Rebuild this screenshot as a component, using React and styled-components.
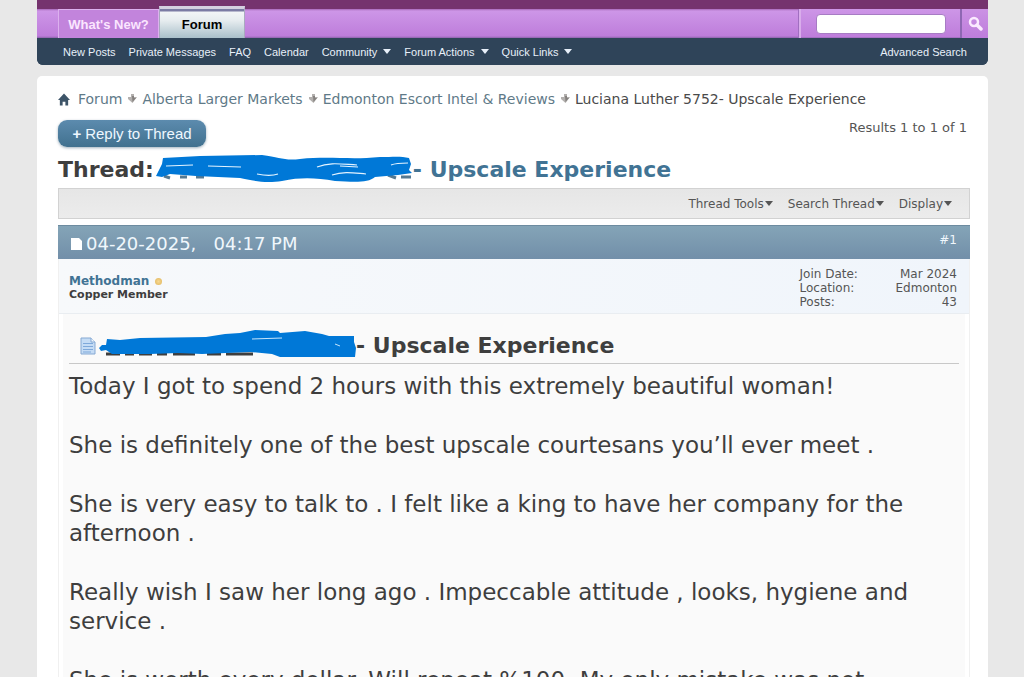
import React from 'react';
import styled, { createGlobalStyle, ThemeProvider } from 'styled-components';

const theme = {
  plum: '#75336e',
  lilac: '#c688e2',
  navy: '#2f4459',
  link: '#417394',
  crumb: '#5f7a88',
  text: '#3e3e3e',
  marker: '#0078d7',
  sans: "'Liberation Sans', Arial, sans-serif",
  verdana: "Verdana, 'DejaVu Sans', sans-serif",
};

const GlobalStyle = createGlobalStyle`
  *, *::before, *::after {
    box-sizing: border-box;
  }

  html {
    scrollbar-width: none;
  }

  body {
    margin: 0;
    background-color: #e8e8e8;
    color: ${theme.text};
    font-family: ${theme.verdana};
    font-size: 13px;
  }

  h1, h2, p, ul, ol, dl, dd {
    margin: 0;
    padding: 0;
  }

  ul, ol {
    list-style: none;
  }

  a {
    color: inherit;
    text-decoration: none;
  }
`;

const StyledPage = styled.div`
  padding: 0 36px 0 37px;
`;

const StyledHeader = styled.header`
  padding-top: 6px;
  border-radius: 0 0 6px 6px;
  overflow: hidden;
  background: linear-gradient(${({ theme }) => theme.plum} 10px, ${({ theme }) => theme.navy} 10px);
  font-family: ${({ theme }) => theme.sans};
`;

const StyledTabBar = styled.div`
  display: flex;
  align-items: stretch;
  justify-content: space-between;
  height: 32px;
  padding-left: 21px;
  background: linear-gradient(
    ${({ theme }) => theme.plum} 3px,
    #a868b8 3px,
    #cd96e7 5px,
    #be7ddb 30px,
    #8d62ab 32px
  );
`;

const StyledTabs = styled.nav`
  display: flex;
  align-items: flex-end;
`;

const StyledTab = styled.a`
  display: flex;
  align-items: center;
  justify-content: center;
  width: ${({ $active }) => ($active ? '86px' : '101px')};
  height: ${({ $active }) => ($active ? '32px' : '29px')};
  padding-top: ${({ $active }) => ($active ? '2px' : '1px')};
  border: 1px solid ${({ $active }) => ($active ? '#a9a9c0' : '#dcb0ee')};
  border-top: ${({ $active }) => ($active ? '3px solid #d5cfe0' : '1px solid #dcb0ee')};
  border-bottom: 0;
  background: ${({ $active }) =>
    $active ? 'linear-gradient(#7b7ba4 2px, #f2f5f7 3px, #e6ecef 40%, #a9c0ca)' : '#c284dc'};
  color: ${({ $active }) => ($active ? '#000' : '#fbe6ff')};
  font-size: 13px;
  font-weight: 700;
`;

const StyledSearch = styled.form`
  display: flex;
  align-items: center;
  margin-top: 3px;
  padding-left: 15px;
  border-left: 2px solid #d9adeb;
  box-shadow: -1px 0 #a06fc0;
  background: linear-gradient(#cd96e7, #be7ddb 28px, #8d62ab);
`;

const StyledSearchInput = styled.input`
  width: 130px;
  height: 20px;
  padding: 0 4px;
  border: 1px solid #a77cc4;
  border-radius: 4px;
  background-color: #fff;
`;

const StyledSearchButton = styled.button`
  display: flex;
  align-items: center;
  justify-content: center;
  width: 28px;
  height: 29px;
  margin-left: 14px;
  padding: 0;
  border: 0;
  border-left: 2px solid #8e67b3;
  background: linear-gradient(#cb92e4, #be7ddb);
`;

const StyledSubNav = styled.nav`
  display: flex;
  align-items: center;
  justify-content: space-between;
  height: 27px;
  padding: 0 21px 0 26px;
  background-color: ${({ theme }) => theme.navy};
  color: #e8f0fa;
  font-size: 11px;
`;

const StyledSubLinks = styled.ul`
  display: flex;
  gap: 13px;
`;

const StyledMenuLink = styled.a`
  display: flex;
  align-items: center;
  gap: ${({ $gap }) => $gap || '6px'};
`;

const StyledCaret = styled.span`
  border: 4px solid transparent;
  border-top: 5px solid currentColor;
  border-bottom: 0;
`;

const StyledMain = styled.main`
  margin-top: 11px;
  padding: 14px 18px 30px 21px;
  border-radius: 5px 5px 0 0;
  background-color: #fff;
`;

const StyledBreadcrumb = styled.ol`
  display: flex;
  align-items: center;
  gap: 5px;
  height: 18px;
  color: ${({ theme }) => theme.crumb};
  font-size: 14px;

  li {
    display: flex;
    align-items: center;
    gap: 6px;
    white-space: nowrap;
  }

  li:first-child {
    padding-right: 3px;
  }

  li:last-child {
    color: #4a4a4a;
  }
`;

const StyledActions = styled.div`
  display: flex;
  align-items: flex-start;
  justify-content: space-between;
  margin-top: 12px;
  padding-right: 3px;
  color: #555;
`;

const StyledReply = styled.button`
  display: flex;
  align-items: center;
  justify-content: center;
  gap: 4px;
  width: 148px;
  height: 27px;
  padding: 0;
  border: 0;
  border-radius: 9px;
  background: linear-gradient(#5c8bae, #41718f);
  box-shadow: 0 1px 3px #9fb0bd;
  color: #eef7ff;
  font-family: ${({ theme }) => theme.sans};
  font-size: 15px;
`;

const StyledThreadTitle = styled.h1`
  display: flex;
  align-items: center;
  gap: 2px;
  height: 30px;
  margin-top: 7px;
  font-size: 22px;
  white-space: nowrap;

  a {
    display: flex;
    align-items: center;
    color: ${({ theme }) => theme.link};
  }
`;

const StyledToolbar = styled.div`
  display: flex;
  align-items: center;
  justify-content: flex-end;
  gap: 15px;
  height: 31px;
  margin-top: 4px;
  padding-right: 17px;
  border: 1px solid #d2d2d2;
  background: linear-gradient(#e6e6e6, #ececec);
  color: #555;
  font-size: 12px;
`;

const StyledPost = styled.article`
  margin-top: 6px;
  border: 1px solid #f0f0f0;
  border-top: 0;
`;

const StyledPostHead = styled.div`
  display: flex;
  align-items: flex-start;
  justify-content: space-between;
  height: 34px;
  margin: 0 -1px;
  padding: 7px 13px 0 13px;
  border-top: 1px solid #6d8ba0;
  background: linear-gradient(#84a4b7, #728fa9);
  color: #f0f7fc;
  font-size: 12px;
`;

const StyledDate = styled.span`
  display: flex;
  align-items: center;
  gap: 4px;
  font-size: 18px;
  line-height: 21px;
  white-space: pre;
`;

const StyledUser = styled.div`
  display: flex;
  align-items: flex-start;
  justify-content: space-between;
  height: 55px;
  padding: 8px 12px 0 10px;
  border-bottom: 1px solid #e9edf1;
  background: linear-gradient(90deg, #f7f9fb, #f0f5fb);
  font-size: 11px;
  line-height: 14px;
`;

const StyledUserName = styled.div`
  padding-top: 7px;
  font-weight: 700;
`;

const StyledName = styled.a`
  display: flex;
  align-items: center;
  gap: 6px;
  color: ${({ theme }) => theme.link};
  font-size: 12px;
`;

const StyledOnline = styled.span`
  width: 7px;
  height: 7px;
  border-radius: 50%;
  background: radial-gradient(#f7d992, #dfb459);
`;

const StyledStats = styled.dl`
  display: grid;
  grid-template-columns: 96px auto;
  color: #555;
  font-size: 12px;

  dd {
    text-align: right;
  }
`;

const StyledPostBody = styled.div`
  margin: 0 4px;
  padding: 14px 6px 30px;
  background-color: #fafafa;
`;

const StyledPostTitle = styled.h2`
  display: flex;
  align-items: center;
  height: 36px;
  padding-left: 11px;
  border-bottom: 1px solid #c8c8c8;
  font-size: 22px;
  white-space: nowrap;
`;

const StyledText = styled.p`
  margin-top: ${({ $first }) => ($first ? '8px' : '30px')};
  font-size: 23px;
  line-height: 29px;
`;

const StyledMarker = styled.svg`
  flex: none;
  overflow: visible;
`;

const StyledDocIcon = styled.svg`
  flex: none;
  margin-right: 3px;
`;

const DocIcon = () => (
  <StyledDocIcon width="16" height="18" viewBox="0 0 16 18" aria-hidden="true">
    <path d="M1 1h10l4 4v12H1z" fill="#c5dcf5" stroke="#86a9d3" />
    <path d="M11 1v4h4" fill="#edf5fd" stroke="#86a9d3" />
    <path d="M3 6.500h10M3 9.500h10M3 12.500h10M3 15h8" stroke="#7fa9da" />
  </StyledDocIcon>
);

const CrumbArrow = () => (
  <svg width="9" height="10" viewBox="0 0 9 10" aria-hidden="true">
    <path d="M3 0h3v3h3L4.500 9 0 5V3h3z" fill="#b3b0ae" />
    <path d="M4 2h2v2h2L4.500 8z" fill="#85817f" />
  </svg>
);

const menus = ['Community', 'Forum Actions', 'Quick Links'];
const tools = ['Thread Tools', 'Search Thread', 'Display'];
const crumbs = ['Forum', 'Alberta Larger Markets', 'Edmonton Escort Intel & Reviews'];

const paragraphs = [
  'Today I got to spend 2 hours with this extremely beautiful woman!',
  'She is definitely one of the best upscale courtesans you’ll ever meet .',
  'She is very easy to talk to . I felt like a king to have her company for the afternoon .',
  'Really wish I saw her long ago . Impeccable attitude , looks, hygiene and service .',
  'She is worth every dollar. Will repeat %100. My only mistake was not',
];

const Header = () => (
  <StyledHeader>
    <StyledTabBar>
      <StyledTabs>
        <StyledTab href="#">What's New?</StyledTab>
        <StyledTab href="#" $active>
          Forum
        </StyledTab>
      </StyledTabs>
      <StyledSearch>
        <StyledSearchInput type="text" aria-label="Search" />
        <StyledSearchButton type="button" aria-label="Search">
          <svg width="15" height="15" viewBox="0 0 15 15" fill="none" stroke="#fbeaff">
            <circle cx="6" cy="6" r="4" strokeWidth="2.500" />
            <path d="M9 9l4 4" strokeWidth="3.500" strokeLinecap="round" />
          </svg>
        </StyledSearchButton>
      </StyledSearch>
    </StyledTabBar>
    <StyledSubNav>
      <StyledSubLinks>
        {['New Posts', 'Private Messages', 'FAQ', 'Calendar'].map((label) => (
          <li key={label}>
            <a href="#">{label}</a>
          </li>
        ))}
        {menus.map((label) => (
          <li key={label}>
            <StyledMenuLink href="#">
              {label}
              <StyledCaret />
            </StyledMenuLink>
          </li>
        ))}
      </StyledSubLinks>
      <a href="#">Advanced Search</a>
    </StyledSubNav>
  </StyledHeader>
);

const Breadcrumb = () => (
  <StyledBreadcrumb>
    <li>
      <svg width="12" height="13" viewBox="0 0 13 13" aria-hidden="true">
        <path d="M6.500 0L13 7h-2v6H8V9H5v4H2V7H0z" fill="#3d5468" />
      </svg>
    </li>
    {crumbs.map((label) => (
      <li key={label}>
        <a href="#">{label}</a>
        <CrumbArrow />
      </li>
    ))}
    <li>Luciana Luther 5752- Upscale Experience</li>
  </StyledBreadcrumb>
);

const TitleMarker = () => (
  <StyledMarker width="257" height="28" viewBox="156 154 257 28" aria-hidden="true">
    <path d="M164 175l6 2M180 176h7M196 176h8M388 174l8 3M401 176h10" stroke="#557991" strokeWidth="3" />
    <path
      d="M163 157L200 155L262 154C280 156 284 160 300 158C330 155 350 159 380 156C393 156 401 155 409 157L411 163L409 169L412 172L398 174L375 176C368 182 355 181 335 180C316 177 302 176 282 180C264 183 250 179 240 177L196 175L170 173L162 176L156 175L162 163Z"
      fill={theme.marker}
    />
    <path
      d="M166 165l27-1M208 165l33 1M257 173c10 2 15 2 21 0M317 166c13-5 23-3 40-2M332 174c12-4 22-2 34-1M340 165l18 1M391 164c5-2 11-2 17-2"
      fill="none"
      stroke="#e3f3ff"
      strokeWidth="1.200"
    />
  </StyledMarker>
);

const PostMarker = () => (
  <StyledMarker width="257" height="28" viewBox="99 330 257 28" aria-hidden="true">
    <path d="M106 352h14M125 352h9M139 352h13M157 352h10M173 352h22M207 352h14M226 352h27" stroke="#3e3e3e" strokeWidth="3" />
    <path
      d="M99 346L102 343L106 343L107 337L120 338L140 336L206 335L225 332L240 331L255 328L278 329L280 331L305 329L322 332L329 334L354 334L354 340L356 346L355 355L280 355L272 352L250 350L202 352L178 351L150 352L112 352L106 348L101 349Z"
      fill={theme.marker}
    />
    <path d="M252 337l30-1M335 342l5 2" stroke="#c5e5fb" strokeWidth="1" />
  </StyledMarker>
);

const Post = () => (
  <StyledPost>
    <StyledPostHead>
      <StyledDate>
        <svg width="11" height="12" viewBox="0 0 11 12" aria-hidden="true">
          <path d="M0 0h8l3 3v9H0z" fill="#fff" />
        </svg>
        04-20-2025,{'  '} 04:17 PM
      </StyledDate>
      <a href="#">#1</a>
    </StyledPostHead>
    <StyledUser>
      <StyledUserName>
        <StyledName href="#">
          Methodman
          <StyledOnline />
        </StyledName>
        Copper Member
      </StyledUserName>
      <StyledStats>
        <dt>Join Date:</dt>
        <dd>Mar 2024</dd>
        <dt>Location:</dt>
        <dd>Edmonton</dd>
        <dt>Posts:</dt>
        <dd>43</dd>
      </StyledStats>
    </StyledUser>
    <StyledPostBody>
      <StyledPostTitle>
        <DocIcon />
        <PostMarker />- Upscale Experience
      </StyledPostTitle>
      {paragraphs.map((text, index) => (
        <StyledText key={text} $first={index === 0}>
          {text}
        </StyledText>
      ))}
    </StyledPostBody>
  </StyledPost>
);

const App = () => {
  return (
    <ThemeProvider theme={theme}>
      <GlobalStyle />
      <StyledPage>
        <Header />
        <StyledMain>
          <Breadcrumb />
          <StyledActions>
            <StyledReply type="button">
              <strong>+</strong> Reply to Thread
            </StyledReply>
            <span>Results 1 to 1 of 1</span>
          </StyledActions>
          <StyledThreadTitle>
            Thread:
            <a href="#">
              <TitleMarker />- Upscale Experience
            </a>
          </StyledThreadTitle>
          <StyledToolbar>
            {tools.map((label) => (
              <StyledMenuLink href="#" key={label} $gap="1px">
                {label}
                <StyledCaret />
              </StyledMenuLink>
            ))}
          </StyledToolbar>
          <Post />
        </StyledMain>
      </StyledPage>
    </ThemeProvider>
  );
};

export default App;
